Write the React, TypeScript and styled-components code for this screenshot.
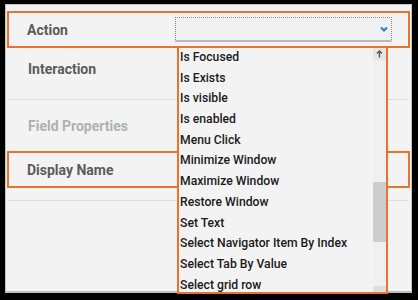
import React from "react";
import styled, { createGlobalStyle } from "styled-components";

const GlobalStyle = createGlobalStyle`
  html, body { margin: 0; padding: 0; background: #000; }
  * { box-sizing: border-box; }
`;

const ORANGE = "#e8742c";

const Frame = styled.div`
  width: 418px;
  height: 300px;
  padding: 4px 6px 7px 5px;
  background: #000;
`;

const Panel = styled.div`
  position: relative;
  height: 100%;
  background: #f3f3f3;
  border: 1px solid #c4c4c4;
  border-bottom: 2px solid #bdbdbd;
  padding: 6px 1px 0 1px;
  display: flex;
  flex-direction: column;
  font-family: Roboto, "Liberation Sans", sans-serif;
`;

const HighlightRow = styled.div`
  height: 37px;
  border: 2.5px solid ${ORANGE};
  display: flex;
  align-items: center;
  padding-left: 18px;
  padding-right: 16px;
`;

const PlainRow = styled.div<{ $h: number; $pt: number; $line?: boolean }>`
  height: ${(p) => p.$h}px;
  display: flex;
  align-items: flex-start;
  padding-top: ${(p) => p.$pt}px;
  padding-left: 20px;
  margin: 0 1px;
  border-bottom: ${(p) => (p.$line ? "1px solid #dcdcdc" : "none")};
`;

const Spacer = styled.div<{ $h: number }>`
  height: ${(p) => p.$h}px;
  margin: 0 1px;
  border-bottom: 1px solid #dcdcdc;
`;

const Label = styled.div<{ $muted?: boolean }>`
  width: 148px;
  font-size: 14px;
  line-height: 16px;
  font-weight: 700;
  color: ${(p) => (p.$muted ? "#b0b0b0" : "#5b5b5b")};
`;

const SelectBox = styled.div`
  flex: 1;
  height: 25px;
  border: 1px dotted #8a8a8a;
  border-bottom: 2px solid #b9b9b9;
  background: #f0f0f0;
  display: flex;
  align-items: center;
  justify-content: flex-end;
  padding-right: 3px;
`;

const DropList = styled.div`
  position: absolute;
  left: 171px;
  top: 41px;
  width: 211px;
  height: 248px;
  border: 2.5px solid ${ORANGE};
  background: #f3f3f3;
  display: flex;
`;

const Items = styled.div`
  flex: 1;
  display: flex;
  flex-direction: column;
  padding-left: 1px;
  margin-top: -1px;
`;

const Item = styled.div`
  height: 20.7px;
  line-height: 20.7px;
  font-family: Roboto, "Liberation Sans", sans-serif;
  font-size: 12.2px;
  font-weight: 500;
  color: #1a1a1a;
  white-space: nowrap;
`;

const ScrollBar = styled.div`
  width: 13px;
  display: flex;
  flex-direction: column;
  align-items: stretch;
  background: #f0f0f0;
`;

const ArrowBtn = styled.div`
  height: 12px;
  background: #e6e6e6;
  display: flex;
  align-items: center;
  justify-content: center;
`;

const Track = styled.div`
  flex: 1;
  padding-top: 122px;
  padding-bottom: 44px;
  display: flex;
`;

const Thumb = styled.div`
  flex: 1;
  background: #cdcdcd;
`;

const BottomBtn = styled.div`
  height: 6px;
  background: #dedede;
`;

const items = [
  "Is Focused",
  "Is Exists",
  "Is visible",
  "Is enabled",
  "Menu Click",
  "Minimize Window",
  "Maximize Window",
  "Restore Window",
  "Set Text",
  "Select Navigator Item By Index",
  "Select Tab By Value",
  "Select grid row",
];

export default function App() {
  return (
    <>
      <GlobalStyle />
      <Frame>
        <Panel>
          <HighlightRow>
            <Label>Action</Label>
            <SelectBox>
              <svg width="8" height="6" viewBox="0 0 8 6">
                <path d="M1 1.5 L4 4.5 L7 1.5" fill="none" stroke="#2b7cc4" strokeWidth="2" />
              </svg>
            </SelectBox>
          </HighlightRow>
          <PlainRow $h={52} $pt={13} $line>
            <Label>Interaction</Label>
          </PlainRow>
          <PlainRow $h={51} $pt={18}>
            <Label $muted>Field Properties</Label>
          </PlainRow>
          <HighlightRow>
            <Label>Display Name</Label>
          </HighlightRow>
          <Spacer $h={13} />
          <DropList>
            <Items>
              {items.map((t) => (
                <Item key={t}>{t}</Item>
              ))}
            </Items>
            <ScrollBar>
              <ArrowBtn>
                <svg width="7" height="8" viewBox="0 0 7 8">
                  <path d="M3.5 1 L3.5 7.5 M1 3.5 L3.5 1 L6 3.5" fill="none" stroke="#555" strokeWidth="1.4" />
                </svg>
              </ArrowBtn>
              <Track>
                <Thumb />
              </Track>
              <BottomBtn />
            </ScrollBar>
          </DropList>
        </Panel>
      </Frame>
    </>
  );
}
